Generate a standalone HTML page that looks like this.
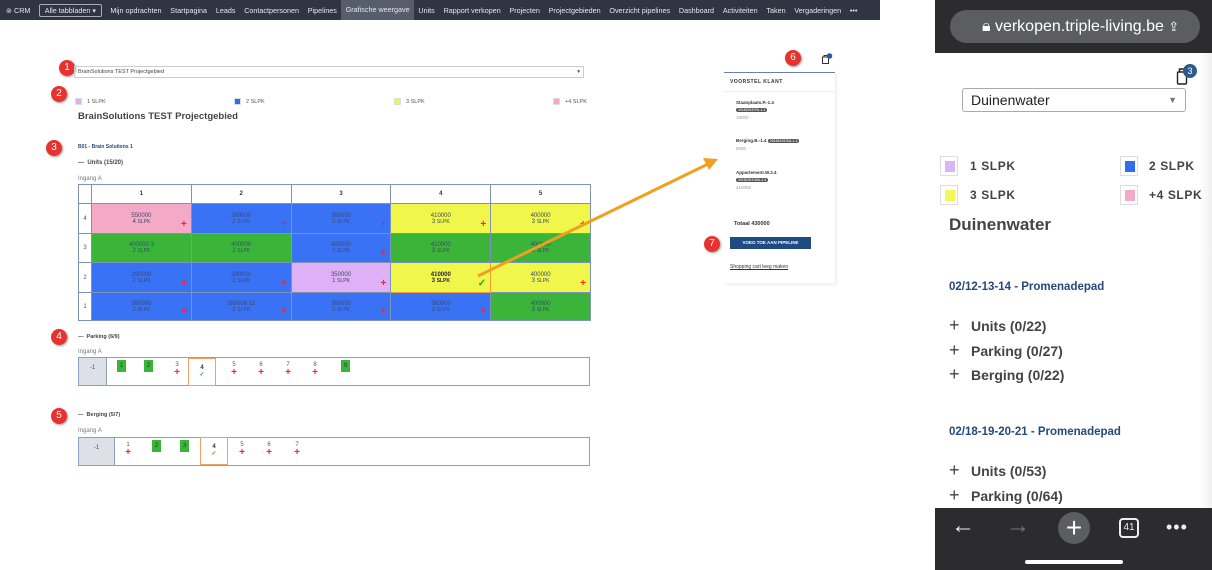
<!DOCTYPE html><html><head><style>
*{margin:0;padding:0;box-sizing:border-box}
body{width:1212px;height:570px;position:relative;overflow:hidden;background:#fff;font-family:"Liberation Sans",sans-serif;color:#333}
.a{position:absolute}
.nav{left:0;top:0;width:880px;height:20px;background:#2f3542;color:#e6e8ee;font-size:7.2px;display:flex;align-items:center;white-space:nowrap}
.nav span{padding:0 4.4px}
.b{position:absolute;width:16px;height:16px;border-radius:50%;background:#e8322f;color:#fff;font-size:10px;text-align:center;line-height:16px;box-shadow:1px 1px 2px #0006}
.lg{font-size:5.5px;color:#555;display:flex;align-items:center;gap:5px}
.lg i{display:inline-block;width:7px;height:7px;border:1px solid #ddd}
table{border-collapse:collapse;position:absolute;left:78px;top:184px;width:512px;font-size:6px;color:#3a4a6a;table-layout:fixed}
td{border:1px solid #7e93b8;text-align:center;position:relative}
.p{position:absolute;right:4px;bottom:4px;color:#f22;font-size:10px;font-weight:bold;line-height:8px}
.pk{color:#f22;font-size:10px;font-weight:bold;line-height:9px}
.pl{font-weight:normal;font-size:18px;display:inline-block;width:22px}
</style></head><body>
<div class="a nav"><span style="padding-left:6px">⊚ CRM</span><span style="border:1px solid #aab;border-radius:2px;margin:0 4px;padding:1px 5px">Alle tabbladen ▾</span><span>Mijn opdrachten</span><span>Startpagina</span><span>Leads</span><span>Contactpersonen</span><span>Pipelines</span><span style="background:#565d6b;height:20px;line-height:20px">Grafische weergave</span><span>Units</span><span>Rapport verkopen</span><span>Projecten</span><span>Projectgebieden</span><span>Overzicht pipelines</span><span>Dashboard</span><span>Activiteiten</span><span>Taken</span><span>Vergaderingen</span><span>•••</span></div>

<div class="b" style="left:59px;top:60px">1</div>
<div class="b" style="left:51px;top:86px">2</div>
<div class="b" style="left:46px;top:140px">3</div>
<div class="b" style="left:51px;top:329px">4</div>
<div class="b" style="left:51px;top:408px">5</div>
<div class="b" style="left:785px;top:50px">6</div>
<div class="b" style="left:704px;top:236px">7</div>

<div class="a" style="left:74px;top:66px;width:510px;height:12px;border:1px solid #ccc;font-size:5.5px;line-height:10px;padding-left:3px;color:#444">BrainSolutions TEST Projectgebied<span style="float:right;padding-right:3px">▾</span></div>
<div class="a lg" style="left:75px;top:98px"><i style="background:#dfb0f5"></i>1 SLPK</div>
<div class="a lg" style="left:234px;top:98px"><i style="background:#2f6cf0"></i>2 SLPK</div>
<div class="a lg" style="left:394px;top:98px"><i style="background:#f0f74a"></i>3 SLPK</div>
<div class="a lg" style="left:553px;top:98px"><i style="background:#f4a9c6"></i>+4 SLPK</div>
<div class="a" style="left:78px;top:111px;font-size:9.5px;font-weight:bold;color:#444">BrainSolutions TEST Projectgebied</div>
<div class="a" style="left:78px;top:144px;font-size:5px;font-weight:bold;color:#2a4a7a">B01 - Brain Solutions 1</div>
<div class="a" style="left:78px;top:160px;font-size:6px;font-weight:bold;color:#444">— &nbsp;Units (15/20)</div>
<div class="a" style="left:78px;top:176px;font-size:6px;color:#777">Ingang A</div>

<table>
<colgroup><col style="width:13px"><col style="width:99.8px"><col style="width:99.8px"><col style="width:99.8px"><col style="width:99.8px"><col style="width:99.8px"></colgroup>
<tr style="height:19px;font-weight:bold;color:#333;background:#fff"><td></td><td>1</td><td>2</td><td>3</td><td>4</td><td>5</td></tr>
<tr style="height:30px"><td style="color:#555">4</td><td style="background:#f4a9c6">550000<br>4 <small>SLPK</small><b class="p">+</b></td><td style="background:#3a72f5">380000<br>2 <small>SLPK</small><b class="p">+</b></td><td style="background:#3a72f5">380000<br>2 <small>SLPK</small><b class="p">+</b></td><td style="background:#f0f74a">410000<br>3 <small>SLPK</small><b class="p">+</b></td><td style="background:#f0f74a">400000<br>3 <small>SLPK</small><b class="p">+</b></td></tr>
<tr style="height:29px"><td style="color:#555">3</td><td style="background:#3ab53a">400000 3<br>2 <small>SLPK</small></td><td style="background:#3ab53a">400000<br>2 <small>SLPK</small></td><td style="background:#3a72f5">400000<br>2 <small>SLPK</small><b class="p">+</b></td><td style="background:#3ab53a">410000<br>3 <small>SLPK</small></td><td style="background:#3ab53a">400000<br>3 <small>SLPK</small></td></tr>
<tr style="height:30px"><td style="color:#555">2</td><td style="background:#3a72f5">390000<br>2 <small>SLPK</small><b class="p">+</b></td><td style="background:#3a72f5">390000<br>2 <small>SLPK</small><b class="p">+</b></td><td style="background:#dfb0f5">350000<br>1 <small>SLPK</small><b class="p">+</b></td><td style="background:#f0f74a;border:1px solid #f0a030;font-weight:bold;color:#223">410000<br>3 <small>SLPK</small><b class="p" style="color:#2a2">✓</b></td><td style="background:#f0f74a">400000<br>3 <small>SLPK</small><b class="p">+</b></td></tr>
<tr style="height:28px"><td style="color:#555">1</td><td style="background:#3a72f5">380000<br>2 <small>SLPK</small><b class="p">+</b></td><td style="background:#3a72f5">380006 12<br>2 <small>SLPK</small><b class="p">+</b></td><td style="background:#3a72f5">380000<br>2 <small>SLPK</small><b class="p">+</b></td><td style="background:#3a72f5">380000<br>2 <small>SLPK</small><b class="p">+</b></td><td style="background:#3ab53a">400000<br>3 <small>SLPK</small></td></tr>
</table>

<div class="a" style="left:78px;top:334px;font-size:5.5px;font-weight:bold;color:#444">— &nbsp;Parking (6/9)</div>
<div class="a" style="left:78px;top:349px;font-size:6px;color:#777">Ingang A</div>
<div class="a" style="left:78px;top:357px;width:512px;height:29px;border:1px solid #8aa0c0"></div>
<div class="a" style="left:78px;top:357px;width:29px;height:29px;background:#dde0e6;border:1px solid #8aa0c0;font-size:6px;text-align:center;padding-top:7px;color:#555">-1</div>
<div class="a" style="left:117px;top:360px;width:9px;height:12px;background:#3ab53a;font-size:6px;text-align:center;line-height:12px">1</div>
<div class="a" style="left:144px;top:360px;width:9px;height:12px;background:#3ab53a;font-size:6px;text-align:center;line-height:12px">2</div>
<div class="a" style="left:172px;top:362px;font-size:6px;text-align:center;width:10px;color:#555">3<br><span class="pk">+</span></div>
<div class="a" style="left:188px;top:358px;width:28px;height:28px;border:1px solid #f0a060;font-size:6px;text-align:center;padding-top:6px;font-weight:bold">4<br><span style="color:#2a2">✓</span></div>
<div class="a" style="left:229px;top:362px;font-size:6px;text-align:center;width:10px;color:#555">5<br><span class="pk">+</span></div>
<div class="a" style="left:256px;top:362px;font-size:6px;text-align:center;width:10px;color:#555">6<br><span class="pk">+</span></div>
<div class="a" style="left:283px;top:362px;font-size:6px;text-align:center;width:10px;color:#555">7<br><span class="pk">+</span></div>
<div class="a" style="left:310px;top:362px;font-size:6px;text-align:center;width:10px;color:#555">8<br><span class="pk">+</span></div>
<div class="a" style="left:341px;top:360px;width:9px;height:12px;background:#3ab53a;font-size:6px;text-align:center;line-height:12px">9</div>

<div class="a" style="left:78px;top:412px;font-size:5.5px;font-weight:bold;color:#444">— &nbsp;Berging (5/7)</div>
<div class="a" style="left:78px;top:428px;font-size:6px;color:#777">Ingang A</div>
<div class="a" style="left:78px;top:437px;width:512px;height:29px;border:1px solid #8aa0c0"></div>
<div class="a" style="left:78px;top:437px;width:37px;height:29px;background:#dde0e6;border:1px solid #8aa0c0;font-size:6px;text-align:center;padding-top:7px;color:#555">-1</div>
<div class="a" style="left:123px;top:442px;font-size:6px;text-align:center;width:10px;color:#555">1<br><span class="pk">+</span></div>
<div class="a" style="left:152px;top:440px;width:9px;height:12px;background:#3ab53a;font-size:6px;text-align:center;line-height:12px">2</div>
<div class="a" style="left:180px;top:440px;width:9px;height:12px;background:#3ab53a;font-size:6px;text-align:center;line-height:12px">3</div>
<div class="a" style="left:200px;top:437px;width:28px;height:28px;border:1px solid #f0a060;font-size:6px;text-align:center;padding-top:6px;font-weight:bold">4<br><span style="color:#2a2">✓</span></div>
<div class="a" style="left:237px;top:442px;font-size:6px;text-align:center;width:10px;color:#555">5<br><span class="pk">+</span></div>
<div class="a" style="left:264px;top:442px;font-size:6px;text-align:center;width:10px;color:#555">6<br><span class="pk">+</span></div>
<div class="a" style="left:292px;top:442px;font-size:6px;text-align:center;width:10px;color:#555">7<br><span class="pk">+</span></div>

<!-- cart panel -->
<svg class="a" style="left:821px;top:53px" width="12" height="12"><rect x="1.5" y="4" width="6" height="6.5" fill="none" stroke="#333" stroke-width="1"/><path d="M3 4V2.5h3V4" fill="none" stroke="#333" stroke-width="1"/><circle cx="8.5" cy="3" r="2.8" fill="#2a5a9a"/></svg>
<div class="a" style="left:724px;top:72px;width:111px;height:211px;border-top:1px solid #6a80a8;box-shadow:2px 2px 3px #0001;background:#fff;font-size:4.5px;color:#333">
<div style="padding:6px 6px;font-weight:bold;letter-spacing:.5px;font-size:5px;border-bottom:1px solid #eee">VOORSTEL KLANT</div>
<div style="padding:7px 12px 8px;font-weight:bold;line-height:7px">Staanplaats.P.-1.4<br><span style="background:#555;color:#ddd;border-radius:2px;padding:0 2px;font-size:3.5px">20182019.PA-1.4</span><br><span style="color:#999;font-weight:normal">15000</span></div>
<div style="padding:8px 12px;font-weight:bold;line-height:8px">Berging.B.-1.4 <span style="background:#555;color:#ddd;border-radius:2px;padding:0 2px;font-size:3.5px">20182019.BA-1.4</span><br><span style="color:#999;font-weight:normal">5000</span></div>
<div style="padding:8px 12px;font-weight:bold;line-height:7px">Appartement.W.2.4<br><span style="background:#555;color:#ddd;border-radius:2px;padding:0 2px;font-size:3.5px">20182019.WA-2.4</span><br><span style="color:#999;font-weight:normal">410000</span></div>
<div class="a" style="left:10px;top:148px;font-weight:bold;font-size:5.5px">Totaal 430000</div>
<div class="a" style="left:6px;top:164px;width:81px;height:12px;background:#1f4a82;color:#fff;font-weight:bold;font-size:4.5px;text-align:center;line-height:12px">VOEG TOE AAN PIPELINE</div>
<div class="a" style="left:6px;top:191px;text-decoration:underline;font-size:5px">Shopping cart leeg maken</div>
</div>

<svg class="a" style="left:0;top:0" width="935" height="570"><line x1="478" y1="276" x2="708" y2="164" stroke="#f0a020" stroke-width="3"/><polygon points="718,159 703,158 709,170" fill="#f0a020"/></svg>

<!-- phone -->
<div class="a" style="left:1200px;top:53px;width:12px;height:455px;background:linear-gradient(90deg,#fff,#f0f0f0)"></div>
<div class="a" style="left:935px;top:0;width:277px;height:53px;background:#2c2c2e"></div>
<div class="a" style="left:950px;top:10px;width:250px;height:33px;border-radius:17px;background:#5b5d61;color:#fff;font-size:16px;line-height:33px;padding-left:32px">🔒︎ verkopen.triple-living.be <span style="font-size:13px">⇪</span></div>
<svg class="a" style="left:1174px;top:62px" width="26" height="26"><rect x="3.5" y="10" width="9" height="12" rx="1" fill="none" stroke="#222" stroke-width="1.4"/><path d="M5.5 10V7h5v3" fill="none" stroke="#222" stroke-width="1.4"/><circle cx="16" cy="9" r="7" fill="#2c5c8c"/><text x="16" y="12" fill="#fff" font-size="9" text-anchor="middle" font-family="Liberation Sans">3</text></svg>
<div class="a" style="left:962px;top:88px;width:224px;height:24px;border:1px solid #aaa;border-radius:3px;font-size:14px;line-height:22px;padding-left:8px;color:#222">Duinenwater<span style="float:right;padding-right:8px;font-size:9px;color:#777">▼</span></div>
<div class="a" style="left:940px;top:156px;width:18px;height:20px;border:1px solid #ddd"><div style="margin:4px;width:10px;height:11px;background:#dcb4f5"></div></div>
<div class="a" style="left:970px;top:159px;font-size:12px;font-weight:bold;letter-spacing:.6px;color:#444">1 SLPK</div>
<div class="a" style="left:1120px;top:156px;width:18px;height:20px;border:1px solid #ddd"><div style="margin:4px;width:10px;height:11px;background:#2f6cf0"></div></div>
<div class="a" style="left:1149px;top:159px;font-size:12px;font-weight:bold;letter-spacing:.6px;color:#444">2 SLPK</div>
<div class="a" style="left:940px;top:185px;width:18px;height:20px;border:1px solid #ddd"><div style="margin:4px;width:10px;height:11px;background:#f2f75a"></div></div>
<div class="a" style="left:970px;top:188px;font-size:12px;font-weight:bold;letter-spacing:.6px;color:#444">3 SLPK</div>
<div class="a" style="left:1120px;top:185px;width:18px;height:20px;border:1px solid #ddd"><div style="margin:4px;width:10px;height:11px;background:#f4a9c6"></div></div>
<div class="a" style="left:1149px;top:188px;font-size:12px;font-weight:bold;letter-spacing:.6px;color:#444">+4 SLPK</div>
<div class="a" style="left:949px;top:215px;font-size:17px;font-weight:bold;color:#444">Duinenwater</div>
<div class="a" style="left:949px;top:281px;font-size:11.5px;font-weight:bold;color:#24497a">02/12-13-14 - Promenadepad</div>
<div class="a" style="left:949px;top:314px;font-size:14px;font-weight:bold;color:#444;line-height:23.5px"><span class="pl">+</span>Units (0/22)<br><span class="pl">+</span>Parking (0/27)<br><span class="pl">+</span>Berging (0/22)</div>
<div class="a" style="left:949px;top:426px;font-size:11.5px;font-weight:bold;color:#24497a">02/18-19-20-21 - Promenadepad</div>
<div class="a" style="left:949px;top:459px;font-size:14px;font-weight:bold;color:#444;line-height:23.5px"><span class="pl">+</span>Units (0/53)<br><span class="pl">+</span>Parking (0/64)</div>
<div class="a" style="left:935px;top:508px;width:277px;height:62px;background:#2c2c2e;color:#fff"></div>
<div class="a" style="left:951px;top:512px;font-size:24px;color:#eee">←</div>
<div class="a" style="left:1006px;top:512px;font-size:24px;color:#777">→</div>
<div class="a" style="left:1058px;top:512px;width:32px;height:32px;border-radius:50%;background:#5b5d61;color:#fff;font-size:28px;text-align:center;line-height:31px">+</div>
<div class="a" style="left:1119px;top:518px;width:20px;height:20px;border:2px solid #eee;border-radius:4px;color:#eee;font-size:10px;text-align:center;line-height:16px">41</div>
<div class="a" style="left:1166px;top:517px;font-size:18px;color:#eee;letter-spacing:1px">•••</div>
<div class="a" style="left:1025px;top:560px;width:98px;height:4px;border-radius:2px;background:#fff"></div>
</body></html>
